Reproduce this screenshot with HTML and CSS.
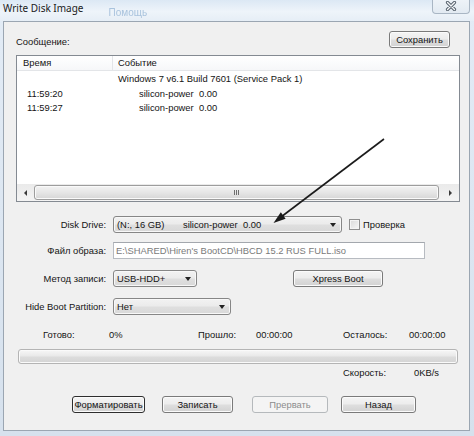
FILE: index.html
```html
<!DOCTYPE html>
<html lang="ru">
<head>
<meta charset="utf-8">
<title>Write Disk Image</title>
<link rel="stylesheet" href="styles.css">
</head>
<body>
<div class="window">
  <div class="titlebar">
    <span class="title">Write Disk Image</span>
    <span class="ghost">Помощь</span>
    <div class="close">
      <svg width="12" height="10" viewBox="0 0 12 10">
        <path d="M2.5 1.5 L9.5 8.5 M9.5 1.5 L2.5 8.5" stroke="#55606c" stroke-width="3.2" stroke-linecap="round"/>
        <path d="M2.5 1.5 L9.5 8.5 M9.5 1.5 L2.5 8.5" stroke="#f4f6f8" stroke-width="1.4" stroke-linecap="round"/>
      </svg>
    </div>
  </div>

  <div class="client">
    <div class="msg-head">
      <span class="msg-label">Сообщение:</span>
      <button class="btn btn-save">Сохранить</button>
    </div>

    <div class="listview">
      <div class="lv-header">
        <div class="lv-col1">Время</div>
        <div class="lv-col2">Событие</div>
      </div>
      <div class="lv-body">
        <div class="lv-row">
          <div class="lv-time"></div>
          <div class="lv-event">Windows 7 v6.1 Build 7601 (Service Pack 1)</div>
        </div>
        <div class="lv-row">
          <div class="lv-time lv-time-ind">11:59:20</div>
          <div class="lv-event lv-event-ind"><span class="ev-dev">silicon-power</span><span>0.00</span></div>
        </div>
        <div class="lv-row">
          <div class="lv-time lv-time-ind">11:59:27</div>
          <div class="lv-event lv-event-ind"><span class="ev-dev">silicon-power</span><span>0.00</span></div>
        </div>
      </div>
      <div class="hscroll">
        <div class="sb-btn"><span class="tri-left"></span></div>
        <div class="sb-track">
          <div class="sb-thumb"><span class="grip"></span></div>
        </div>
        <div class="sb-btn"><span class="tri-right"></span></div>
      </div>
    </div>

    <div class="frow frow-drive">
      <span class="flabel">Disk Drive:</span>
      <div class="combo combo-drive">
        <span class="cd-a">(N:, 16 GB)</span><span class="cd-b">silicon-power</span><span>0.00</span>
        <span class="caret"></span>
      </div>
      <span class="checkbox"></span>
      <span class="check-label">Проверка</span>
    </div>

    <div class="frow frow-file">
      <span class="flabel">Файл образа:</span>
      <div class="textbox">E:\SHARED\Hiren's BootCD\HBCD 15.2 RUS FULL.iso</div>
    </div>

    <div class="frow frow-method">
      <span class="flabel">Метод записи:</span>
      <div class="combo combo-method">USB-HDD+<span class="caret"></span></div>
      <button class="btn btn-xpress">Xpress Boot</button>
    </div>

    <div class="frow frow-hide">
      <span class="flabel">Hide Boot Partition:</span>
      <div class="combo combo-hide">Нет<span class="caret"></span></div>
    </div>

    <div class="stats">
      <span class="st st-1">Готово:</span><span class="st st-2">0%</span><span class="st st-3">Прошло:</span><span class="st st-4">00:00:00</span><span class="st st-5">Осталось:</span><span>00:00:00</span>
    </div>

    <div class="progress"></div>

    <div class="speed">
      <span class="st st-5 st-speed">Скорость:</span><span>0KB/s</span>
    </div>

    <div class="actions">
      <button class="btn btn-default btn-format">Форматировать</button>
      <button class="btn btn-write">Записать</button>
      <button class="btn btn-disabled btn-abort">Прервать</button>
      <button class="btn btn-back">Назад</button>
    </div>
  </div>

  <svg class="pointer-arrow" width="474" height="436" viewBox="0 0 474 436">
    <line x1="384" y1="139" x2="281" y2="217" stroke="#1b1b1b" stroke-width="1.6"/>
    <path d="M273.5 223 L280.8 212.3 L285.6 218.7 Z" fill="#1b1b1b"/>
  </svg>
</div>
</body>
</html>
```

FILE: styles.css
```css
* { box-sizing: border-box; }
html, body { margin: 0; padding: 0; }
body {
  width: 474px;
  height: 436px;
  overflow: hidden;
  background: linear-gradient(180deg, #e3ecf6 0%, #d6e1ed 100%);
  font-family: "Liberation Sans", Arial, sans-serif;
  font-size: 9.4px;
  color: #141414;
}
.window { position: relative; width: 474px; height: 436px; }

/* title bar */
.titlebar {
  height: 21px;
  display: flex;
  align-items: flex-start;
  background: linear-gradient(180deg, #dce8f4 0%, #eef4fa 55%, #e6eef6 100%);
}
.title {
  font-family: "Noto Sans", "Liberation Sans", sans-serif;
  font-size: 10px;
  line-height: 16px;
  margin-left: 3px;
  color: #1a1a1a;
}
.ghost {
  margin-left: 25px;
  margin-top: 7px;
  font-size: 10px;
  line-height: 12px;
  color: #a9c3dd;
  filter: blur(0.6px);
}
.close {
  margin-left: auto;
  margin-right: 4px;
  margin-top: -1px;
  width: 38px;
  height: 15px;
  border: 1px solid #a9b6c4;
  border-top: none;
  border-radius: 0 0 4px 4px;
  background: linear-gradient(180deg, #eef3f8 0%, #e2eaf2 100%);
  display: flex;
  align-items: center;
  justify-content: center;
}

/* client area */
.client {
  margin: 0 4px 0 3px;
  height: 410px;
  border: 1px solid #9ba6b2;
  background: #f0f0f0;
  padding: 9px 9px 0 12px;
  display: flex;
  flex-direction: column;
}
.msg-head {
  display: flex;
  justify-content: space-between;
  align-items: flex-end;
  height: 17px;
  margin-right: 10px;
}
.msg-label { line-height: 12px; }

/* buttons */
.btn {
  font-family: "Liberation Sans", Arial, sans-serif;
  font-size: 9.4px;
  color: #141414;
  height: 17px;
  padding: 0;
  border: 1px solid #7a7a7a;
  border-radius: 3px;
  background: linear-gradient(180deg, #f4f4f4 0%, #ececec 48%, #dedede 52%, #d2d2d2 100%);
  box-shadow: inset 0 0 0 1px #fbfbfb;
  line-height: 14px;
  text-align: center;
}
.btn-save { width: 61px; }
.btn-default { border-color: #2e2e2e; }
.btn-disabled {
  color: #8c8c8c;
  border-color: #b5b9bc;
  background: #f4f4f4;
  box-shadow: none;
}

/* list view */
.listview {
  margin-top: 7px;
  height: 147px;
  border: 1px solid #848a92;
  background: #fff;
  display: flex;
  flex-direction: column;
}
.lv-header {
  display: flex;
  height: 15px;
  border-bottom: 1px solid #e3e5e8;
  background: linear-gradient(180deg, #ffffff 0%, #f6f7f9 100%);
  line-height: 14px;
}
.lv-col1 { width: 96px; padding-left: 6px; border-right: 1px solid #e3e5e8; }
.lv-col2 { flex: 1; padding-left: 5px; }
.lv-body { flex: 1; padding-top: 1px; }
.lv-row { display: flex; height: 14.5px; line-height: 14.5px; white-space: nowrap; }
.lv-time { width: 96px; }
.lv-time-ind { padding-left: 10px; }
.lv-event { padding-left: 5px; }
.lv-event-ind { padding-left: 26px; }
.ev-dev { display: inline-block; width: 60px; }

.hscroll {
  height: 17px;
  display: flex;
  background: linear-gradient(180deg, #eaeaea 0%, #f4f4f4 100%);
}
.sb-btn { width: 17px; display: flex; align-items: center; justify-content: center; }
.tri-left {
  width: 0; height: 0;
  border-top: 3px solid transparent;
  border-bottom: 3px solid transparent;
  border-right: 3px solid #3a3a3a;
}
.tri-right {
  width: 0; height: 0;
  border-top: 3px solid transparent;
  border-bottom: 3px solid transparent;
  border-left: 3px solid #3a3a3a;
}
.sb-track { flex: 1; padding: 1px 3px 1px 0; display: flex; }
.sb-thumb {
  flex: 1;
  border: 1px solid #9d9d9d;
  border-radius: 3px;
  background: linear-gradient(180deg, #f3f3f3 0%, #e6e6e6 50%, #d6d6d6 100%);
  box-shadow: inset 0 0 0 1px #fafafa;
  display: flex;
  align-items: center;
  justify-content: center;
}
.grip {
  width: 5px;
  height: 5px;
  background: repeating-linear-gradient(90deg, #6e6e6e 0 1px, transparent 1px 2px);
}

/* form rows */
.frow { display: flex; align-items: center; height: 17px; }
.frow-drive { margin-top: 14px; }
.frow-file { margin-top: 9px; }
.frow-method { margin-top: 11px; }
.frow-hide { margin-top: 11px; }
.flabel { width: 90px; margin-right: 7px; text-align: right; white-space: nowrap; }

.combo {
  position: relative;
  height: 17px;
  border: 1px solid #868686;
  border-radius: 3px;
  background: linear-gradient(180deg, #f2f2f2 0%, #ebebeb 48%, #dfdfdf 52%, #d8d8d8 100%);
  box-shadow: inset 0 0 0 1px #f8f8f8;
  padding-left: 3px;
  line-height: 15px;
  white-space: nowrap;
}
.combo-drive { width: 229px; display: flex; }
.cd-a { width: 66px; }
.cd-b { width: 60px; }
.combo-method { width: 84px; }
.combo-hide { width: 118px; }
.caret {
  position: absolute;
  right: 5px;
  top: 6px;
  width: 0; height: 0;
  border-left: 3.5px solid transparent;
  border-right: 3.5px solid transparent;
  border-top: 4px solid #222;
}
.checkbox {
  width: 11px;
  height: 11px;
  margin-left: 7px;
  border: 1px solid #8f8f8f;
  background: linear-gradient(135deg, #d9d9d9 0%, #f6f6f6 100%);
  box-shadow: inset 0 0 0 1px #f3f3f3;
}
.check-label { margin-left: 3px; }
.textbox {
  width: 312px;
  height: 17px;
  border: 1px solid #b7bbc1;
  border-top-color: #a3a7ad;
  background: #fff;
  color: #7a7a7a;
  padding-left: 2px;
  line-height: 15px;
  white-space: nowrap;
}
.btn-xpress { width: 90px; margin-left: 96px; }

/* progress */
.stats { margin-top: 14px; padding-left: 27px; line-height: 12px; display: flex; white-space: nowrap; }
.st { display: inline-block; }
.st-1 { width: 66px; }
.st-2 { width: 89px; }
.st-3 { width: 58px; }
.st-4 { width: 87px; }
.st-5 { width: 66px; }
.st-speed { width: 71px; }
.progress {
  margin-top: 8px;
  margin-left: 2px;
  width: 440px;
  height: 15px;
  border: 1px solid #b4b4b4;
  border-radius: 3px;
  background: linear-gradient(180deg, #f7f7f7 0%, #e9e9e9 45%, #dcdcdc 55%, #d4d4d4 100%);
  box-shadow: inset 0 0 0 1px #fafafa;
}
.speed { margin-top: 3px; padding-left: 327px; line-height: 12px; display: flex; white-space: nowrap; }

.actions { margin-top: 17px; padding-left: 56px; display: flex; }
.btn-format { width: 73px; }
.btn-write { width: 71px; margin-left: 17px; }
.btn-abort { width: 76px; margin-left: 19px; }
.btn-back { width: 75px; margin-left: 13px; }

/* annotation arrow drawn over the dialog */
.pointer-arrow { position: absolute; left: 0; top: 0; pointer-events: none; }
```
